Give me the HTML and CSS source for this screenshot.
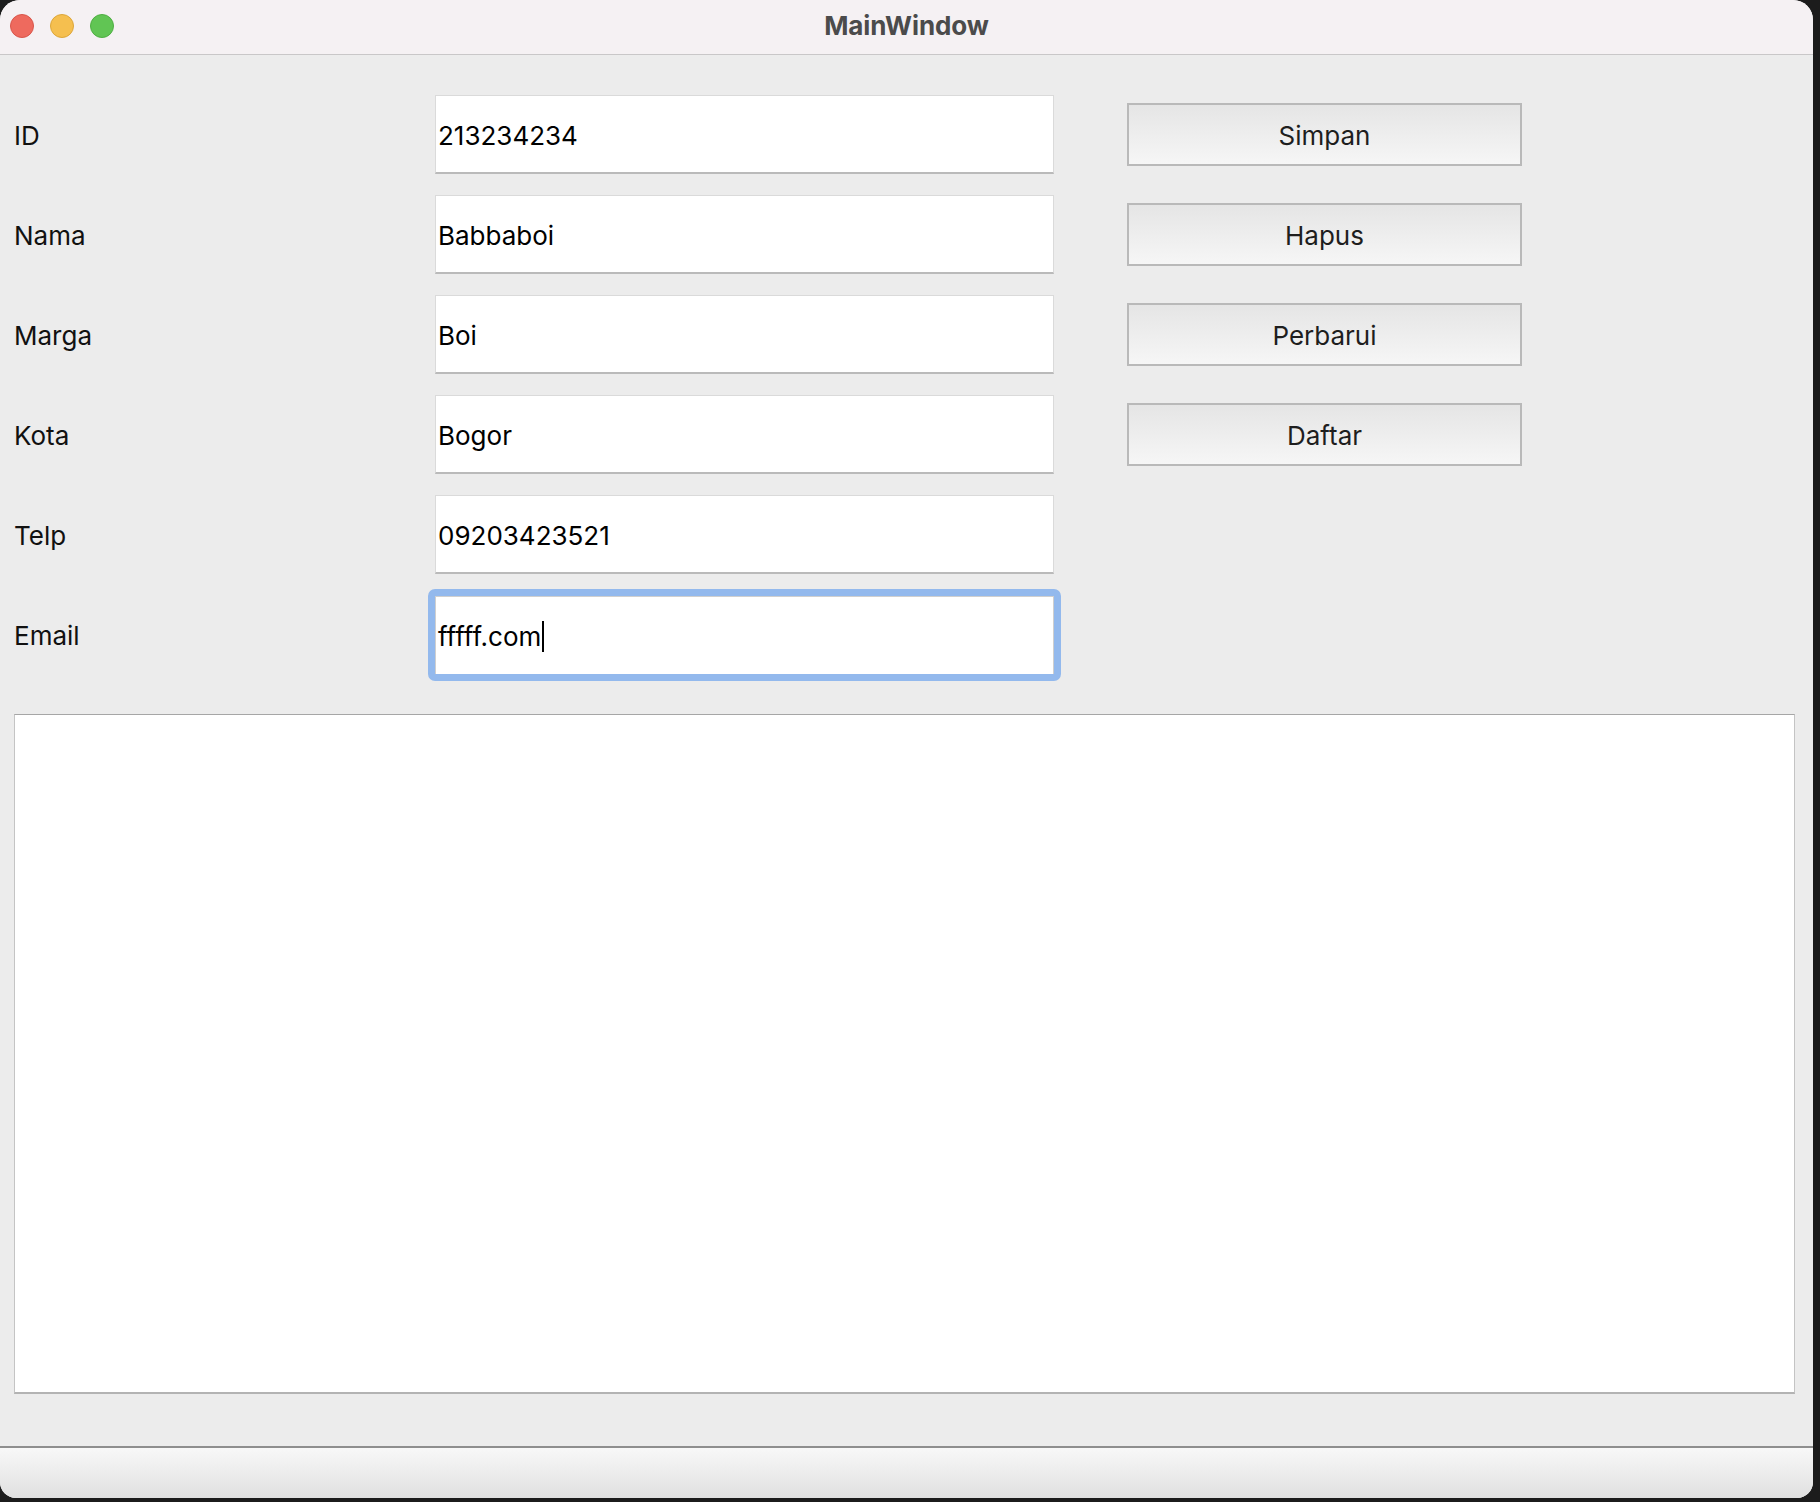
FILE: index.html
```html
<!DOCTYPE html>
<html lang="id">
<head>
<meta charset="utf-8">
<title>MainWindow</title>
<link rel="stylesheet" href="styles.css">
</head>
<body>
<div class="window">
  <div class="titlebar">
    <div class="lights">
      <span class="light red"></span>
      <span class="light yellow"></span>
      <span class="light green"></span>
    </div>
    <div class="title">MainWindow</div>
    <div class="spacer"></div>
  </div>
  <div class="content">
    <div class="form">
      <div class="label">ID</div>
      <div class="field">213234234</div>
      <div class="btn-cell"><div class="btn">Simpan</div></div>

      <div class="label">Nama</div>
      <div class="field">Babbaboi</div>
      <div class="btn-cell"><div class="btn">Hapus</div></div>

      <div class="label">Marga</div>
      <div class="field">Boi</div>
      <div class="btn-cell"><div class="btn">Perbarui</div></div>

      <div class="label">Kota</div>
      <div class="field">Bogor</div>
      <div class="btn-cell"><div class="btn">Daftar</div></div>

      <div class="label">Telp</div>
      <div class="field">09203423521</div>
      <div class="btn-cell"></div>

      <div class="label">Email</div>
      <div class="field focused">fffff.com<span class="caret"></span></div>
      <div class="btn-cell"></div>
    </div>
    <div class="pane"></div>
  </div>
  <div class="statusbar"></div>
</div>
</body>
</html>
```
FILE: styles.css
```css
html, body {
  margin: 0;
  padding: 0;
}
body {
  width: 1820px;
  height: 1502px;
  background: #1c1c1c;
  font-family: "Inter", "Liberation Sans", sans-serif;
  overflow: hidden;
}
.window {
  width: 1813px;
  height: 1498px;
  background: #ececec;
  border-radius: 20px 20px 16px 16px;
  overflow: hidden;
  display: flex;
  flex-direction: column;
}
.titlebar {
  box-sizing: border-box;
  height: 55px;
  flex: none;
  background: #f5f1f3;
  border-bottom: 1px solid #c9c7c8;
  display: grid;
  grid-template-columns: 1fr auto 1fr;
  align-items: center;
}
.lights {
  display: flex;
  gap: 16px;
  padding-left: 10px;
  margin-top: -2px;
}
.light {
  width: 24px;
  height: 24px;
  border-radius: 50%;
  box-sizing: border-box;
}
.red { background: #ee6a5e; border: 1px solid #d8564b; }
.yellow { background: #f5bf4f; border: 1px solid #dca63a; }
.green { background: #61c554; border: 1px solid #4fae43; }
.title {
  font-size: 26px;
  font-weight: 700;
  color: #4b4b4b;
  margin-top: -4px;
  letter-spacing: -0.1px;
}
.content {
  flex: 1;
  display: flex;
  flex-direction: column;
}
.form {
  display: grid;
  grid-template-columns: 421px 619px 395px;
  grid-auto-rows: 79px;
  row-gap: 21px;
  column-gap: 0;
  padding: 40px 0 0 14px;
}
.label {
  font-size: 26px;
  color: #111;
  display: flex;
  align-items: center;
  padding-top: 2px;
}
.field {
  position: relative;
  box-sizing: border-box;
  background: #fff;
  border: 1px solid #dadada;
  border-bottom: 2px solid #bababa;
  font-size: 26px;
  color: #000;
  display: flex;
  align-items: center;
  padding: 2px 0 0 2px;
}
.field.focused {
  height: 80px;
  margin-top: 1px;
  border-color: #cfcfcf;
  border-bottom-color: #b0b0b0;
}
.field.focused::after {
  content: "";
  position: absolute;
  left: -8px;
  right: -8px;
  top: -8px;
  bottom: -7px;
  border: 7px solid #93b9ed;
  border-radius: 7px;
  pointer-events: none;
}
.caret {
  display: inline-block;
  width: 2px;
  height: 31px;
  background: #000;
  margin-left: 1px;
}
.btn-cell {
  padding-left: 73px;
  display: flex;
  align-items: center;
  box-sizing: border-box;
  width: 468px;
}
.btn {
  box-sizing: border-box;
  width: 395px;
  height: 63px;
  border: 2px solid #b9b9b9;
  background: linear-gradient(#e5e5e5, #f6f6f6);
  display: flex;
  align-items: center;
  justify-content: center;
  font-size: 26px;
  color: #1e1e1e;
  padding-top: 2px;
}
.pane {
  box-sizing: border-box;
  margin: 40px 0 0 14px;
  width: 1781px;
  height: 680px;
  background: #fff;
  border: 1px solid #c4c4c4;
  border-top-color: #a6a6a6;
  border-bottom: 2px solid #b3b3b3;
}
.statusbar {
  box-sizing: border-box;
  height: 52px;
  flex: none;
  border-top: 2px solid #8e8e8e;
  background: linear-gradient(#f8f8f8, #e0e0e0);
}
```
